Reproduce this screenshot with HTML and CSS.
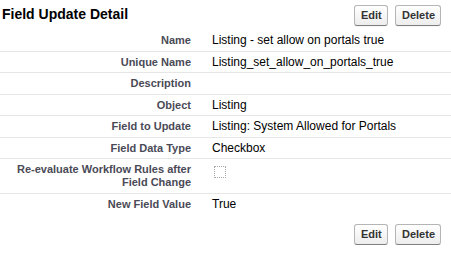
FILE: index.html
```html
<!DOCTYPE html>
<html>
<head>
<meta charset="utf-8">
<link rel="stylesheet" href="styles.css">
</head>
<body>
<div class="page">
  <div class="header">
    <h2 class="title">Field Update Detail</h2>
    <div class="buttons">
      <button class="btn">Edit</button>
      <button class="btn">Delete</button>
    </div>
  </div>
  <div class="detail">
    <div class="row"><div class="label">Name</div><div class="value">Listing - set allow on portals true</div></div>
    <div class="row"><div class="label">Unique Name</div><div class="value">Listing_set_allow_on_portals_true</div></div>
    <div class="row"><div class="label">Description</div><div class="value"></div></div>
    <div class="row"><div class="label">Object</div><div class="value">Listing</div></div>
    <div class="row"><div class="label">Field to Update</div><div class="value">Listing: System Allowed for Portals</div></div>
    <div class="row"><div class="label">Field Data Type</div><div class="value">Checkbox</div></div>
    <div class="row tall"><div class="label">Re-evaluate Workflow Rules after Field Change</div><div class="value"><span class="checkbox"></span></div></div>
    <div class="row last"><div class="label">New Field Value</div><div class="value">True</div></div>
  </div>
  <div class="footer">
    <div class="buttons">
      <button class="btn">Edit</button>
      <button class="btn">Delete</button>
    </div>
  </div>
</div>
</body>
</html>
```

FILE: styles.css
```css
html, body {
  margin: 0;
  padding: 0;
  background: #ffffff;
}
body {
  font-family: "Liberation Sans", Arial, sans-serif;
  color: #000;
}
.page {
  width: 451px;
}
.header {
  display: flex;
  align-items: center;
  justify-content: space-between;
  height: 30px;
  padding: 0 10px 0 2px;
  box-sizing: border-box;
}
.title {
  margin: 0;
  font-size: 14px;
  font-weight: bold;
  color: #000;
  position: relative;
  top: -1px;
}
.buttons {
  display: flex;
  gap: 7px;
}
.btn {
  font-family: "Liberation Sans", Arial, sans-serif;
  font-size: 11px;
  font-weight: bold;
  color: #333;
  height: 21px;
  padding: 0 6px;
  border: 1px solid #b5b5b5;
  border-bottom-color: #7f7f7f;
  border-radius: 3px;
  background: linear-gradient(#ffffff, #ededed);
  box-shadow: 0 1px 0 rgba(0,0,0,0.04);
}
.header .btn:first-child, .footer .btn:first-child {
  width: 34px;
}
.header .btn:last-child, .footer .btn:last-child {
  width: 46px;
}
.detail {
  display: flex;
  flex-direction: column;
}
.row {
  display: grid;
  grid-template-columns: 202px 1fr;
  border-bottom: 1px solid #e6e6e6;
  min-height: 20.5px;
}
.row.last {
  border-bottom: none;
}
.label {
  font-size: 11px;
  font-weight: bold;
  color: #4a4a56;
  text-align: right;
  padding: 3px 11px 3px 10px;
  line-height: 14.5px;
}
.row.tall .label {
  line-height: 13.5px;
  padding-top: 3.5px;
  padding-bottom: 3.5px;
}
.value {
  font-size: 12px;
  padding: 3px 10px 3px 10px;
  line-height: 14.5px;
}
.checkbox {
  display: inline-block;
  width: 10px;
  height: 10px;
  border: 1px dotted #aaa;
  margin-top: 4px;
  margin-left: 2px;
}
.footer {
  display: flex;
  justify-content: flex-end;
  padding: 9px 10px 0 0;
}
```
